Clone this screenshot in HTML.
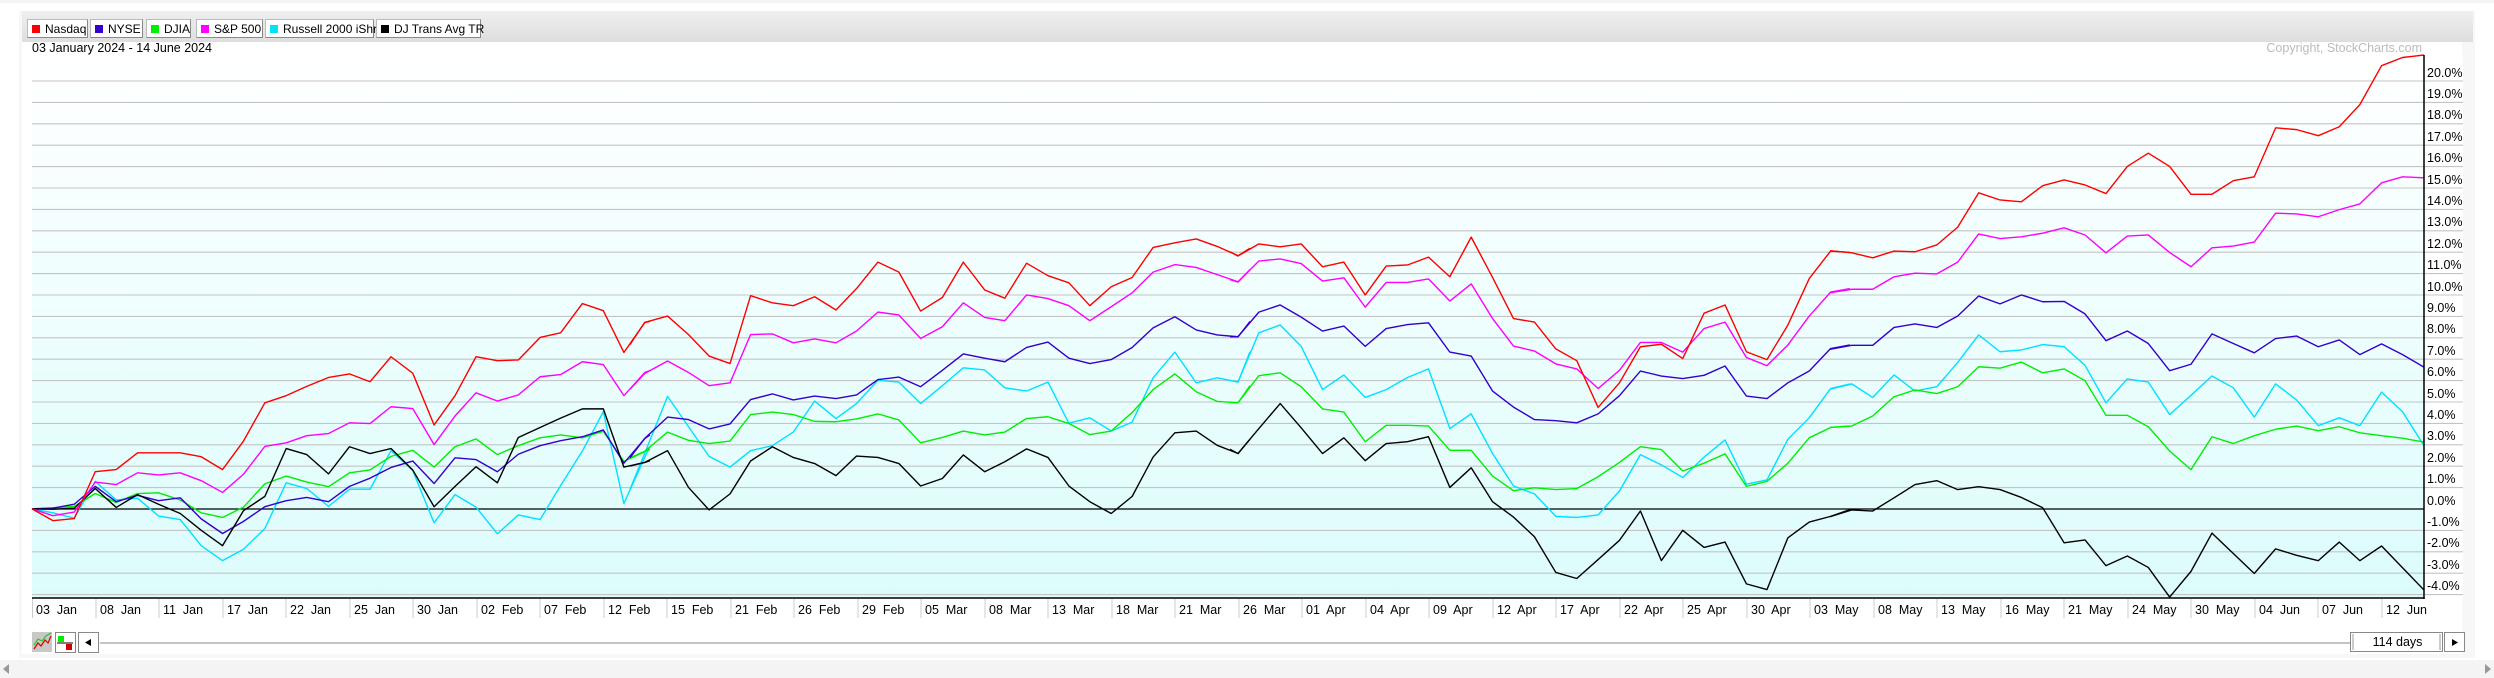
<!DOCTYPE html>
<html><head><meta charset="utf-8"><style>
body{margin:0;width:2494px;height:678px;background:#fff;position:relative;overflow:hidden;font-family:"Liberation Sans",Arial,sans-serif;}
.a{position:absolute}
.btn{position:absolute;top:19px;height:19px;background:#fff;border:1px solid #bbb;border-right-color:#888;border-bottom-color:#888;font-size:12px;line-height:18px;box-sizing:border-box;padding-left:4px;white-space:nowrap;color:#000}
.btn i{display:inline-block;width:8px;height:8px;margin-right:5px;vertical-align:0px}
.yl{position:absolute;left:2427px;font-size:12.5px;color:#000}
.xl{position:absolute;top:603px;font-size:12.5px;color:#000;white-space:pre}
</style></head><body>
<div class="a" style="left:0;top:0;width:2494px;height:3px;background:#f3f4f6"></div>
<div class="a" style="left:19px;top:11px;width:2456px;height:647px;background:#f7f7f7"></div>
<div class="a" style="left:22px;top:11px;width:2451px;height:31px;background:linear-gradient(#efefef,#dedede)"></div>
<div class="a" style="left:22px;top:42px;width:2440px;height:612px;background:#fff"></div>
<div class="btn" style="left:27px;width:61px"><i style="background:#f00"></i>Nasdaq</div>
<div class="btn" style="left:90px;width:53px"><i style="background:#3300cc"></i>NYSE</div>
<div class="btn" style="left:146px;width:45px"><i style="background:#00ee00"></i>DJIA</div>
<div class="btn" style="left:196px;width:67px"><i style="background:#f0f"></i>S&amp;P 500</div>
<div class="btn" style="left:265px;width:109px"><i style="background:#00e0ff"></i>Russell 2000 iShr</div>
<div class="btn" style="left:376px;width:105px"><i style="background:#000"></i>DJ Trans Avg TR</div>
<div class="a" style="left:32px;top:41px;font-size:12.5px">03 January 2024 - 14 June 2024</div>
<div class="a" style="left:2130px;width:292px;top:41px;font-size:12.5px;color:#bbb;text-align:right">Copyright, StockCharts.com</div>
<svg class="a" style="left:0;top:0" width="2494" height="678">
<defs><linearGradient id="bg" x1="0" y1="0" x2="0" y2="1"><stop offset="0" stop-color="#fff"/><stop offset="1" stop-color="#dcfcfc"/></linearGradient></defs>
<rect x="32" y="55" width="2392" height="543" fill="url(#bg)"/>
<rect x="2424" y="55" width="39" height="543" fill="#fff"/>
<g stroke="#c4c4c4" stroke-width="1.1">
<line x1="32" x2="2463" y1="81" y2="81"/><line x1="32" x2="2463" y1="102.4" y2="102.4"/><line x1="32" x2="2463" y1="123.8" y2="123.8"/><line x1="32" x2="2463" y1="145.2" y2="145.2"/><line x1="32" x2="2463" y1="166.6" y2="166.6"/><line x1="32" x2="2463" y1="188" y2="188"/><line x1="32" x2="2463" y1="209.4" y2="209.4"/><line x1="32" x2="2463" y1="230.8" y2="230.8"/><line x1="32" x2="2463" y1="252.2" y2="252.2"/><line x1="32" x2="2463" y1="273.6" y2="273.6"/><line x1="32" x2="2463" y1="295" y2="295"/><line x1="32" x2="2463" y1="316.4" y2="316.4"/><line x1="32" x2="2463" y1="337.8" y2="337.8"/><line x1="32" x2="2463" y1="359.2" y2="359.2"/><line x1="32" x2="2463" y1="380.6" y2="380.6"/><line x1="32" x2="2463" y1="402" y2="402"/><line x1="32" x2="2463" y1="423.4" y2="423.4"/><line x1="32" x2="2463" y1="444.8" y2="444.8"/><line x1="32" x2="2463" y1="466.2" y2="466.2"/><line x1="32" x2="2463" y1="487.6" y2="487.6"/><line x1="32" x2="2463" y1="530.4" y2="530.4"/><line x1="32" x2="2463" y1="551.8" y2="551.8"/><line x1="32" x2="2463" y1="573.2" y2="573.2"/><line x1="32" x2="2463" y1="594.6" y2="594.6"/>
</g>
<line x1="32" x2="2424" y1="509" y2="509" stroke="#000" stroke-width="1.3"/>
<g fill="none" stroke-width="1.4" stroke-linejoin="round">
<g transform="translate(30,50) scale(0.3954,0.3571)">
<polyline vector-effect="non-scaling-stroke" stroke="#00e0ff" points="5,1285 58,1296 112,1311 165,1208 218,1260 272,1255 325,1305 380,1315 433,1388 487,1430 540,1398 594,1340 648,1212 700,1228 755,1278 808,1230 860,1230 913,1122 968,1178 1022,1324 1075,1245 1128,1280 1182,1355 1235,1302 1290,1315 1342,1220 1397,1123 1450,1013 1502,1270 1555,1140 1568,1110"/>
<polyline vector-effect="non-scaling-stroke" stroke="#00ee00" points="5,1285 58,1282 112,1278 165,1242 218,1267 272,1242 325,1240 380,1260 433,1296 487,1309 540,1280 594,1215 648,1193 700,1210 755,1223 808,1184 860,1176 913,1138 968,1121 1022,1168 1075,1111 1128,1089 1182,1133 1235,1108 1290,1086 1342,1078 1397,1086 1450,1068 1502,1152 1555,1125 1568,1118"/>
<polyline vector-effect="non-scaling-stroke" stroke="#3300cc" points="5,1285 58,1283 112,1272 165,1222 218,1265 272,1247 325,1262 380,1254 433,1313 487,1354 540,1320 594,1279 648,1262 700,1253 755,1265 808,1222 860,1199 913,1169 968,1151 1022,1214 1075,1142 1128,1147 1182,1181 1235,1132 1290,1108 1342,1094 1397,1083 1450,1064 1502,1157 1555,1088 1568,1078"/>
<polyline vector-effect="non-scaling-stroke" stroke="#000" points="5,1285 58,1286 112,1283 165,1228 218,1281 272,1245 325,1272 380,1298 433,1345 487,1388 540,1290 594,1250 648,1116 700,1133 755,1187 808,1111 860,1130 913,1116 968,1176 1022,1279 1075,1222 1128,1167 1182,1212 1235,1085 1290,1057 1342,1031 1397,1005 1450,1005 1502,1168 1555,1155 1568,1150"/>
<polyline vector-effect="non-scaling-stroke" stroke="#f0f" points="5,1285 58,1304 112,1294 165,1210 218,1217 272,1184 325,1190 380,1184 433,1206 487,1239 540,1188 594,1110 648,1100 700,1080 755,1074 808,1044 860,1046 913,999 968,1004 1022,1105 1075,1025 1128,960 1182,983 1235,966 1290,915 1342,909 1397,873 1450,881 1502,968 1555,903 1568,898"/>
<polyline vector-effect="non-scaling-stroke" stroke="#f00" points="5,1285 58,1318 112,1312 165,1181 218,1175 272,1128 325,1128 380,1128 433,1139 487,1175 540,1095 594,988 648,968 700,942 755,917 808,907 860,929 913,859 968,905 1022,1050 1075,968 1128,859 1182,870 1235,868 1290,805 1342,792 1397,710 1450,730 1502,847 1555,763 1568,760"/>
</g>
<g transform="translate(630,50) scale(0.3954,0.3571)">
<polyline vector-effect="non-scaling-stroke" stroke="#00e0ff" points="0,1230 37,1130 95,970 148,1055 200,1138 253,1168 305,1122 360,1108 413,1070 467,983 521,1032 573,990 627,925 680,930 735,990 790,940 843,890 897,896 948,946 1003,955 1057,930 1110,1045 1163,1030 1217,1067 1270,1042 1323,918 1378,846 1432,932 1485,918 1538,930 1568,845"/>
<polyline vector-effect="non-scaling-stroke" stroke="#00ee00" points="0,1142 37,1124 95,1070 148,1093 200,1102 253,1095 305,1021 360,1014 413,1021 467,1040 521,1041 573,1033 627,1019 680,1036 735,1100 790,1085 843,1067 897,1078 948,1070 1003,1032 1057,1027 1110,1046 1163,1077 1217,1067 1270,1015 1323,951 1378,907 1432,957 1485,984 1538,988 1568,940"/>
<polyline vector-effect="non-scaling-stroke" stroke="#3300cc" points="0,1142 37,1088 95,1028 148,1035 200,1061 253,1047 305,979 360,963 413,980 467,969 521,976 573,966 627,923 680,916 735,943 790,897 843,851 897,863 948,873 1003,833 1057,818 1110,863 1163,878 1217,867 1270,833 1323,778 1378,747 1432,784 1485,798 1538,803 1568,760"/>
<polyline vector-effect="non-scaling-stroke" stroke="#000" points="0,1165 37,1155 95,1122 148,1225 200,1288 253,1243 305,1151 360,1111 413,1141 467,1158 521,1192 573,1137 627,1141 680,1158 735,1221 790,1200 843,1134 897,1181 948,1153 1003,1117 1057,1141 1110,1221 1163,1265 1217,1298 1270,1250 1323,1140 1378,1072 1432,1067 1485,1107 1538,1130 1568,1090"/>
<polyline vector-effect="non-scaling-stroke" stroke="#f0f" points="0,950 37,906 95,871 148,903 200,940 253,932 305,797 360,795 413,820 467,809 521,820 573,787 627,734 680,742 735,808 790,775 843,708 897,749 948,758 1003,686 1057,696 1110,716 1163,758 1217,719 1270,680 1323,622 1378,601 1432,609 1485,629 1538,649 1568,615"/>
<polyline vector-effect="non-scaling-stroke" stroke="#f00" points="0,825 37,763 95,745 148,797 200,857 253,878 305,688 360,708 413,716 467,691 521,728 573,668 627,594 680,622 735,731 790,693 843,594 897,672 948,695 1003,597 1057,632 1110,652 1163,716 1217,663 1270,637 1323,553 1378,540 1432,529 1485,550 1538,576 1568,555"/>
</g>
<g transform="translate(1230,50) scale(0.3954,0.3571)">
<polyline vector-effect="non-scaling-stroke" stroke="#00e0ff" points="0,925 20,930 73,792 127,770 180,830 234,951 288,910 342,973 395,951 449,917 502,893 556,1060 610,1019 664,1130 717,1221 770,1243 824,1306 877,1309 931,1302 985,1235 1038,1133 1091,1162 1145,1197 1199,1140 1252,1092 1306,1216 1358,1204 1411,1090 1465,1030 1519,948 1568,935"/>
<polyline vector-effect="non-scaling-stroke" stroke="#00ee00" points="0,987 20,988 73,912 127,904 180,943 234,1005 288,1014 342,1097 395,1051 449,1051 502,1053 556,1121 610,1121 664,1193 717,1234 770,1226 824,1231 877,1228 931,1195 985,1155 1038,1111 1091,1119 1145,1179 1199,1157 1252,1131 1306,1222 1358,1208 1411,1157 1465,1086 1519,1057 1568,1053"/>
<polyline vector-effect="non-scaling-stroke" stroke="#3300cc" points="0,803 20,803 73,734 127,714 180,748 234,787 288,773 342,830 395,780 449,769 502,764 556,846 610,857 664,955 717,1000 770,1035 824,1038 877,1044 931,1019 985,968 1038,899 1091,913 1145,920 1199,911 1252,885 1306,969 1358,976 1411,932 1465,899 1519,836 1568,826"/>
<polyline vector-effect="non-scaling-stroke" stroke="#000" points="0,1118 20,1130 73,1060 127,990 180,1058 234,1130 288,1086 342,1150 395,1102 449,1097 502,1083 556,1225 610,1170 664,1265 717,1308 770,1363 824,1463 877,1480 931,1427 985,1373 1038,1291 1091,1430 1145,1345 1199,1393 1252,1378 1306,1495 1358,1511 1411,1366 1465,1322 1519,1306 1568,1287"/>
<polyline vector-effect="non-scaling-stroke" stroke="#f0f" points="0,643 20,650 73,591 127,585 180,598 234,647 288,638 342,720 395,651 449,651 502,641 556,703 610,655 664,752 717,829 770,843 824,879 877,893 931,948 985,897 1038,819 1091,819 1145,846 1199,780 1252,762 1306,861 1358,884 1411,826 1465,745 1519,678 1568,668"/>
<polyline vector-effect="non-scaling-stroke" stroke="#f00" points="0,565 20,577 73,543 127,551 180,543 234,607 288,594 342,686 395,605 449,602 502,580 556,635 610,524 664,637 717,752 770,762 824,837 877,870 931,1001 985,932 1038,831 1091,824 1145,864 1199,737 1252,714 1306,845 1358,867 1411,770 1465,640 1519,563 1568,567"/>
</g>
<g transform="translate(1830,50) scale(0.3954,0.3571)">
<polyline vector-effect="non-scaling-stroke" stroke="#00e0ff" points="0,950 55,935 108,973 162,910 215,955 270,943 323,875 376,798 430,845 484,840 538,825 592,831 645,883 698,988 752,921 805,930 859,1021 913,967 966,913 1020,946 1073,1028 1127,935 1180,980 1235,1052 1288,1030 1340,1052 1395,958 1448,1013 1502,1108"/>
<polyline vector-effect="non-scaling-stroke" stroke="#00ee00" points="0,1057 55,1053 108,1025 162,971 215,952 270,962 323,943 376,887 430,891 484,874 538,904 592,893 645,926 698,1023 752,1023 805,1055 859,1123 913,1175 966,1083 1020,1102 1073,1080 1127,1062 1180,1053 1235,1066 1288,1055 1340,1072 1395,1080 1448,1087 1502,1098"/>
<polyline vector-effect="non-scaling-stroke" stroke="#3300cc" points="0,838 55,827 108,827 162,777 215,767 270,777 323,745 376,689 430,711 484,686 538,705 592,704 645,739 698,814 752,787 805,822 859,898 913,880 966,795 1020,822 1073,848 1127,808 1180,801 1235,831 1288,812 1340,853 1395,823 1448,853 1502,888"/>
<polyline vector-effect="non-scaling-stroke" stroke="#000" points="0,1307 55,1288 108,1291 162,1254 215,1217 270,1206 323,1231 376,1223 430,1231 484,1253 538,1282 592,1380 645,1372 698,1444 752,1417 805,1449 859,1532 913,1460 966,1353 1020,1410 1073,1466 1127,1397 1180,1415 1235,1430 1288,1378 1340,1430 1395,1389 1448,1450 1502,1512"/>
<polyline vector-effect="non-scaling-stroke" stroke="#f0f" points="0,680 55,670 108,670 162,635 215,625 270,627 323,594 376,515 430,528 484,523 538,513 592,498 645,518 698,568 752,521 805,518 859,567 913,607 966,554 1020,549 1073,538 1127,457 1180,459 1235,467 1288,447 1340,431 1395,372 1448,355 1502,358"/>
<polyline vector-effect="non-scaling-stroke" stroke="#f00" points="0,562 55,568 108,582 162,563 215,565 270,546 323,496 376,400 430,420 484,425 538,380 592,364 645,378 698,402 752,326 805,289 859,326 913,404 966,404 1020,366 1073,355 1127,218 1180,223 1235,240 1288,215 1340,153 1395,44 1448,21 1502,14"/>
</g>
</g>
<line x1="2424" x2="2424" y1="55" y2="599" stroke="#000" stroke-width="1.5"/>
<line x1="32" x2="2424.7" y1="598" y2="598" stroke="#000" stroke-width="1.5"/>
<g stroke="#ccc" stroke-width="1">
<line x1="32.5" x2="32.5" y1="599" y2="618"/><line x1="96" x2="96" y1="599" y2="618"/><line x1="159" x2="159" y1="599" y2="618"/><line x1="223" x2="223" y1="599" y2="618"/><line x1="286" x2="286" y1="599" y2="618"/><line x1="350" x2="350" y1="599" y2="618"/><line x1="413" x2="413" y1="599" y2="618"/><line x1="477" x2="477" y1="599" y2="618"/><line x1="540" x2="540" y1="599" y2="618"/><line x1="604" x2="604" y1="599" y2="618"/><line x1="667" x2="667" y1="599" y2="618"/><line x1="731" x2="731" y1="599" y2="618"/><line x1="794" x2="794" y1="599" y2="618"/><line x1="858" x2="858" y1="599" y2="618"/><line x1="921" x2="921" y1="599" y2="618"/><line x1="985" x2="985" y1="599" y2="618"/><line x1="1048" x2="1048" y1="599" y2="618"/><line x1="1112" x2="1112" y1="599" y2="618"/><line x1="1175" x2="1175" y1="599" y2="618"/><line x1="1239" x2="1239" y1="599" y2="618"/><line x1="1302" x2="1302" y1="599" y2="618"/><line x1="1366" x2="1366" y1="599" y2="618"/><line x1="1429" x2="1429" y1="599" y2="618"/><line x1="1493" x2="1493" y1="599" y2="618"/><line x1="1556" x2="1556" y1="599" y2="618"/><line x1="1620" x2="1620" y1="599" y2="618"/><line x1="1683" x2="1683" y1="599" y2="618"/><line x1="1747" x2="1747" y1="599" y2="618"/><line x1="1810" x2="1810" y1="599" y2="618"/><line x1="1874" x2="1874" y1="599" y2="618"/><line x1="1937" x2="1937" y1="599" y2="618"/><line x1="2001" x2="2001" y1="599" y2="618"/><line x1="2064" x2="2064" y1="599" y2="618"/><line x1="2128" x2="2128" y1="599" y2="618"/><line x1="2191" x2="2191" y1="599" y2="618"/><line x1="2255" x2="2255" y1="599" y2="618"/><line x1="2318" x2="2318" y1="599" y2="618"/><line x1="2382" x2="2382" y1="599" y2="618"/>
</g>
<rect x="32" y="632" width="20" height="20" fill="#c8c8c8"/>
<polyline points="34,649 38,643 41,646 45,640 48,643 51,636" fill="none" stroke="#d00" stroke-width="1.2"/>
<polyline points="34,645 38,639 42,641 46,636 51,633" fill="none" stroke="#2c2" stroke-width="1.2"/>
<rect x="55.5" y="632.5" width="20" height="20" fill="#fff" stroke="#888"/>
<rect x="58" y="636" width="6" height="6" fill="#0e0"/><line x1="57" x2="73" y1="643" y2="643" stroke="#000"/><rect x="66" y="644" width="6" height="6" fill="#c00"/>
<rect x="78.5" y="632.5" width="20" height="20" fill="#fff" stroke="#888"/>
<polygon points="85,642.5 91,639 91,646" fill="#000"/>
<line x1="100" x2="2350" y1="643" y2="643" stroke="#888"/>
<rect x="2350.5" y="632.5" width="92" height="19" fill="#fff" stroke="#888"/>
<line x1="2353" x2="2353" y1="634" y2="650" stroke="#999"/><line x1="2440" x2="2440" y1="634" y2="650" stroke="#999"/>
<rect x="2444.5" y="632.5" width="20" height="19" fill="#fff" stroke="#888"/>
<polygon points="2452,639 2458,642.5 2452,646" fill="#000"/>
<rect x="0" y="660" width="2494" height="18" fill="#f4f4f4"/>
<polygon points="3,669 9,664 9,674" fill="#999"/>
<polygon points="2485,664 2491,669 2485,674" fill="#999"/>
</svg>
<div class="a" style="left:2355px;width:85px;top:635px;font-size:12.5px;text-align:center">114 days</div>
<div class="yl" style="top:66px">20.0%</div><div class="yl" style="top:87px">19.0%</div><div class="yl" style="top:108px">18.0%</div><div class="yl" style="top:130px">17.0%</div><div class="yl" style="top:151px">16.0%</div><div class="yl" style="top:173px">15.0%</div><div class="yl" style="top:194px">14.0%</div><div class="yl" style="top:215px">13.0%</div><div class="yl" style="top:237px">12.0%</div><div class="yl" style="top:258px">11.0%</div><div class="yl" style="top:280px">10.0%</div><div class="yl" style="top:301px">9.0%</div><div class="yl" style="top:322px">8.0%</div><div class="yl" style="top:344px">7.0%</div><div class="yl" style="top:365px">6.0%</div><div class="yl" style="top:387px">5.0%</div><div class="yl" style="top:408px">4.0%</div><div class="yl" style="top:429px">3.0%</div><div class="yl" style="top:451px">2.0%</div><div class="yl" style="top:472px">1.0%</div><div class="yl" style="top:494px">0.0%</div><div class="yl" style="top:515px">-1.0%</div><div class="yl" style="top:536px">-2.0%</div><div class="yl" style="top:558px">-3.0%</div><div class="yl" style="top:579px">-4.0%</div>
<div class="xl" style="left:36px">03  Jan</div><div class="xl" style="left:100px">08  Jan</div><div class="xl" style="left:163px">11  Jan</div><div class="xl" style="left:227px">17  Jan</div><div class="xl" style="left:290px">22  Jan</div><div class="xl" style="left:354px">25  Jan</div><div class="xl" style="left:417px">30  Jan</div><div class="xl" style="left:481px">02  Feb</div><div class="xl" style="left:544px">07  Feb</div><div class="xl" style="left:608px">12  Feb</div><div class="xl" style="left:671px">15  Feb</div><div class="xl" style="left:735px">21  Feb</div><div class="xl" style="left:798px">26  Feb</div><div class="xl" style="left:862px">29  Feb</div><div class="xl" style="left:925px">05  Mar</div><div class="xl" style="left:989px">08  Mar</div><div class="xl" style="left:1052px">13  Mar</div><div class="xl" style="left:1116px">18  Mar</div><div class="xl" style="left:1179px">21  Mar</div><div class="xl" style="left:1243px">26  Mar</div><div class="xl" style="left:1306px">01  Apr</div><div class="xl" style="left:1370px">04  Apr</div><div class="xl" style="left:1433px">09  Apr</div><div class="xl" style="left:1497px">12  Apr</div><div class="xl" style="left:1560px">17  Apr</div><div class="xl" style="left:1624px">22  Apr</div><div class="xl" style="left:1687px">25  Apr</div><div class="xl" style="left:1751px">30  Apr</div><div class="xl" style="left:1814px">03  May</div><div class="xl" style="left:1878px">08  May</div><div class="xl" style="left:1941px">13  May</div><div class="xl" style="left:2005px">16  May</div><div class="xl" style="left:2068px">21  May</div><div class="xl" style="left:2132px">24  May</div><div class="xl" style="left:2195px">30  May</div><div class="xl" style="left:2259px">04  Jun</div><div class="xl" style="left:2322px">07  Jun</div><div class="xl" style="left:2386px">12  Jun</div>
</body></html>
